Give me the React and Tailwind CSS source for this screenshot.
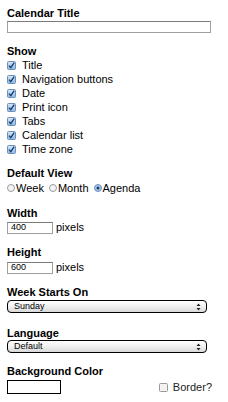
import React from 'react';

const CheckBox = ({ checked }) =>
  checked ? (
    <svg width="9" height="9" viewBox="0 0 9 9" className="shrink-0">
      <defs>
        <linearGradient id="cbg" x1="0" y1="0" x2="0" y2="1">
          <stop offset="0" stopColor="#d6e6f7" />
          <stop offset="1" stopColor="#8fb7e3" />
        </linearGradient>
      </defs>
      <rect x="0.5" y="0.5" width="8" height="8" rx="1" fill="url(#cbg)" stroke="#6d8fb8" />
      <path d="M2 4.6 L3.8 6.6 L7.2 1.6" fill="none" stroke="#1b3e6e" strokeWidth="1.4" />
    </svg>
  ) : (
    <svg width="9" height="9" viewBox="0 0 9 9" className="shrink-0">
      <rect x="0.5" y="0.5" width="8" height="8" rx="1" fill="#f2f2f2" stroke="#9a9a9a" />
    </svg>
  );

const Radio = ({ checked }) => (
  <svg width="8" height="8" viewBox="0 0 8 8" className="shrink-0">
    <circle cx="4" cy="4" r="3.5" fill={checked ? '#a9c8ea' : '#f4f4f4'} stroke={checked ? '#6d8fb8' : '#9a9a9a'} />
    {checked && <circle cx="4" cy="4" r="1.5" fill="#1b3e6e" />}
  </svg>
);

const Label = ({ children, className = '' }) => (
  <div className={`font-bold text-[11px] leading-[13px] text-black ${className}`}>{children}</div>
);

const Select = ({ value, className = '' }) => (
  <div
    className={`flex items-center justify-between w-[200px] h-[13px] border border-black rounded-[4px] bg-gradient-to-b from-white via-[#f0f0f0] to-[#d8d8d8] pl-[6px] pr-[5px] ${className}`}
  >
    <span className="text-[9px] leading-none text-black">{value}</span>
    <svg width="5" height="8" viewBox="0 0 5 8">
      <path d="M0.5 3 L2.5 0.5 L4.5 3 Z" fill="#222" />
      <path d="M0.5 5 L2.5 7.5 L4.5 5 Z" fill="#222" />
    </svg>
  </div>
);

const App = () => {
  const shows = ['Title', 'Navigation buttons', 'Date', 'Print icon', 'Tabs', 'Calendar list', 'Time zone'];

  return (
    <div className="w-[228px] h-[402px] bg-white px-[7px] pt-[7px] text-[11px] leading-[13px] text-black" style={{ fontFamily: '"Liberation Sans", Arial, sans-serif' }}>
      {/* Calendar Title */}
      <Label>Calendar Title</Label>
      <div className="mt-[1px] w-[204px] h-[12px] border border-[#a0a0a0] border-t-[#7a7a7a] bg-white" />

      {/* Show */}
      <Label className="mt-[12px]">Show</Label>
      <div className="flex flex-col">
        {shows.map((s) => (
          <div key={s} className="flex items-center h-[14px]">
            <CheckBox checked />
            <span className="ml-[6px]">{s}</span>
          </div>
        ))}
      </div>

      {/* Default View */}
      <Label className="mt-[11px]">Default View</Label>
      <div className="flex items-center h-[14px] mt-[1px]">
        <Radio />
        <span className="ml-[1px]">Week</span>
        <span className="ml-[5px]"><Radio /></span>
        <span className="ml-[1px]">Month</span>
        <span className="ml-[5px]"><Radio checked /></span>
        <span className="ml-[1px]">Agenda</span>
      </div>

      {/* Width */}
      <Label className="mt-[12px]">Width</Label>
      <div className="flex items-center mt-[1px]">
        <div className="w-[46px] h-[12px] border border-[#a0a0a0] border-t-[#7a7a7a] bg-white pl-[3px] flex items-center text-[9px] leading-none">400</div>
        <span className="ml-[3px]">pixels</span>
      </div>

      {/* Height */}
      <Label className="mt-[12px]">Height</Label>
      <div className="flex items-center mt-[2px]">
        <div className="w-[46px] h-[12px] border border-[#a0a0a0] border-t-[#7a7a7a] bg-white pl-[3px] flex items-center text-[9px] leading-none">600</div>
        <span className="ml-[3px]">pixels</span>
      </div>

      {/* Week Starts On */}
      <Label className="mt-[12px]">Week Starts On</Label>
      <Select value="Sunday" className="mt-[1px]" />

      {/* Language */}
      <Label className="mt-[14px]">Language</Label>
      <Select value="Default" />

      {/* Background Color */}
      <Label className="mt-[12px]">Background Color</Label>
      <div className="flex items-center justify-between mt-[2px] w-[205px]">
        <div className="w-[54px] h-[14px] border border-black bg-white" />
        <div className="flex items-center">
          <CheckBox />
          <span className="ml-[5px] text-[#222]">Border?</span>
        </div>
      </div>
    </div>
  );
};

export default App;
